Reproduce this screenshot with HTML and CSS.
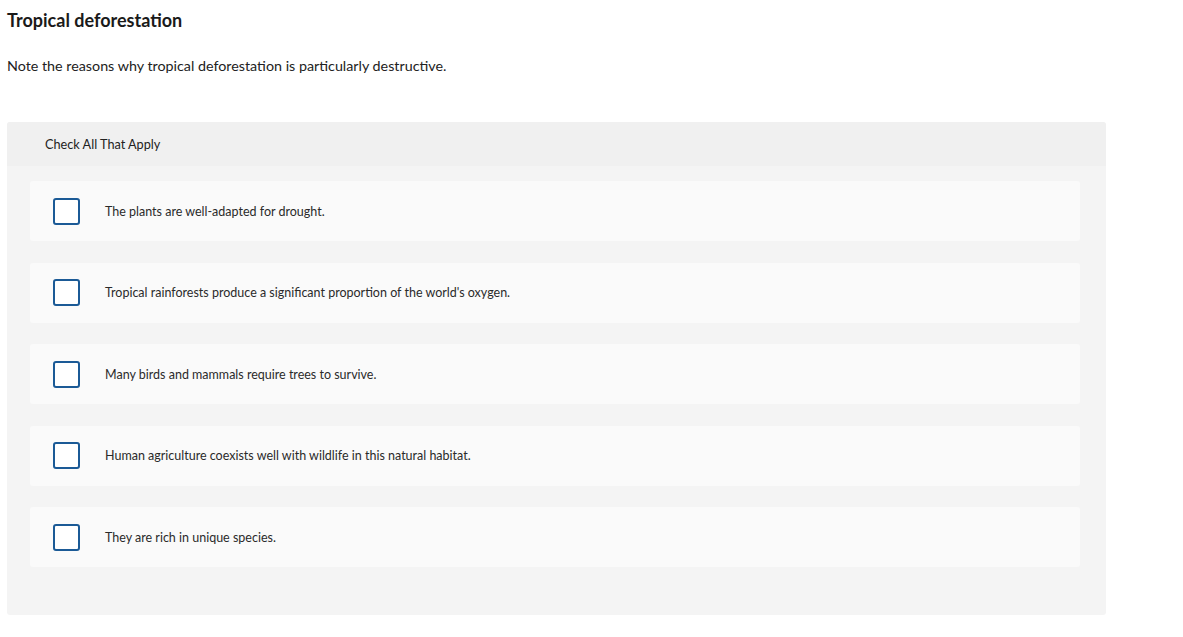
FILE: index.html
```html
<!DOCTYPE html>
<html>
<head>
<meta charset="utf-8">
<link rel="stylesheet" href="styles.css">
</head>
<body>
<div class="page">
  <h1 class="title">Tropical deforestation</h1>
  <p class="prompt">Note the reasons why tropical deforestation is particularly destructive.</p>
  <div class="panel">
    <div class="panel-head">Check All That Apply</div>
    <div class="panel-body">
      <label class="choice"><span class="box"></span><span class="text">The plants are well-adapted for drought.</span></label>
      <label class="choice"><span class="box"></span><span class="text">Tropical rainforests produce a significant proportion of the world's oxygen.</span></label>
      <label class="choice"><span class="box"></span><span class="text">Many birds and mammals require trees to survive.</span></label>
      <label class="choice"><span class="box"></span><span class="text">Human agriculture coexists well with wildlife in this natural habitat.</span></label>
      <label class="choice"><span class="box"></span><span class="text">They are rich in unique species.</span></label>
    </div>
  </div>
</div>
</body>
</html>
```
FILE: styles.css
```css
* { box-sizing: border-box; }
html, body { margin: 0; padding: 0; background: #fff; }
body { font-family: Lato, "Open Sans", "Liberation Sans", sans-serif; color: #222; }
.page { padding: 9px 7px 0 7px; width: 1113px; }
.title { margin: 0; font-size: 18px; font-weight: 700; line-height: 22px; color: #1a1a1a; }
.prompt { margin: 25px 0 0 0; font-size: 14.3px; line-height: 20px; color: #222; }
.panel { margin-top: 46px; background: #f4f4f4; border-radius: 3px; overflow: hidden; height: 493px; }
.panel-head { background: #f0f0f0; height: 44px; display: flex; align-items: center; padding-left: 38px; font-size: 12.7px; color: #222; }
.panel-body { padding: 15px 26px 0 23px; display: flex; flex-direction: column; gap: 21.5px; }
.choice { display: flex; align-items: center; height: 60px; background: #fafafa; border-radius: 3px; padding-left: 23px; }
.box { width: 27px; height: 27px; border: 2px solid #1b5a96; border-radius: 3px; background: #fff; flex: none; }
.text { margin-left: 25px; font-size: 12.5px; color: #2a2a2a; }
```
